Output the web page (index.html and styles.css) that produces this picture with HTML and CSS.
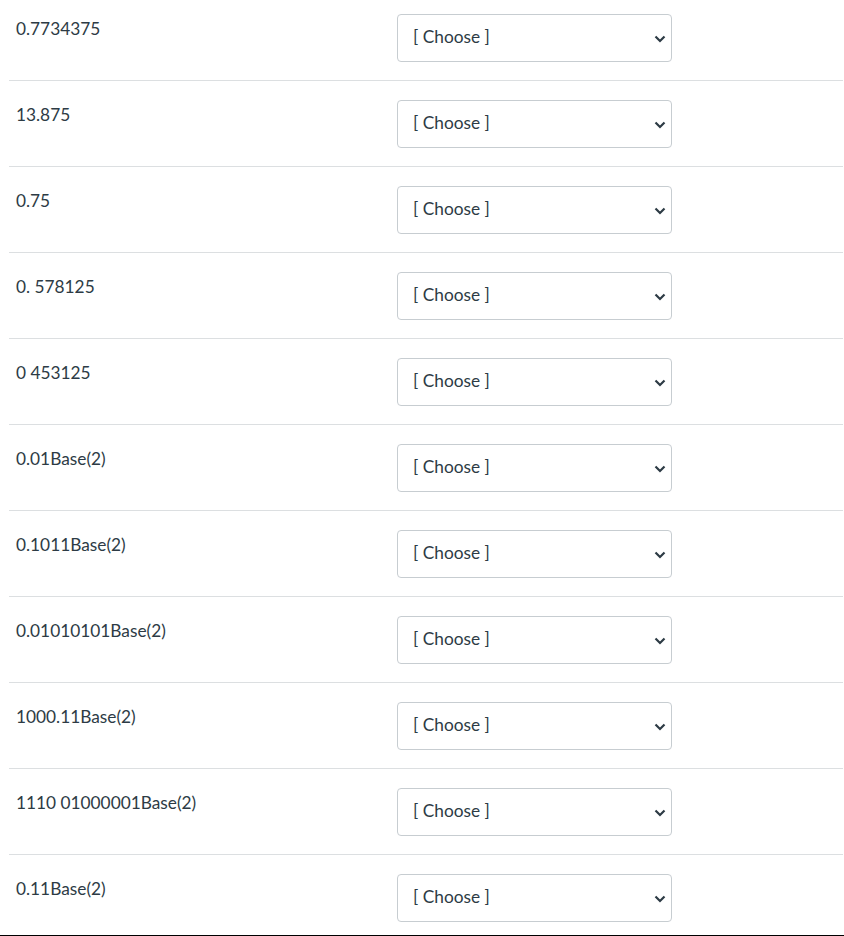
FILE: index.html
```html
<!DOCTYPE html>
<html lang="en">
<head>
  <meta charset="UTF-8">
  <title>Matching Question</title>
  <link rel="stylesheet" href="styles.css">
</head>
<body>
  <div class="page">
    <!-- answer rows -->
    <div class="match-list">
      <div class="match-row">
        <div class="match-label">0.7734375</div>
        <div class="select-wrap">
          <select class="match-select"><option>[ Choose ]</option></select>
          <svg class="chevron" width="12" height="8" viewBox="0 0 12 8"><path d="M1.5 1.5 L6 6 L10.5 1.5" fill="none" stroke="#2d3b45" stroke-width="2.2"/></svg>
        </div>
      </div>
      <div class="match-row">
        <div class="match-label">13.875</div>
        <div class="select-wrap">
          <select class="match-select"><option>[ Choose ]</option></select>
          <svg class="chevron" width="12" height="8" viewBox="0 0 12 8"><path d="M1.5 1.5 L6 6 L10.5 1.5" fill="none" stroke="#2d3b45" stroke-width="2.2"/></svg>
        </div>
      </div>
      <div class="match-row">
        <div class="match-label">0.75</div>
        <div class="select-wrap">
          <select class="match-select"><option>[ Choose ]</option></select>
          <svg class="chevron" width="12" height="8" viewBox="0 0 12 8"><path d="M1.5 1.5 L6 6 L10.5 1.5" fill="none" stroke="#2d3b45" stroke-width="2.2"/></svg>
        </div>
      </div>
      <div class="match-row">
        <div class="match-label">0. 578125</div>
        <div class="select-wrap">
          <select class="match-select"><option>[ Choose ]</option></select>
          <svg class="chevron" width="12" height="8" viewBox="0 0 12 8"><path d="M1.5 1.5 L6 6 L10.5 1.5" fill="none" stroke="#2d3b45" stroke-width="2.2"/></svg>
        </div>
      </div>
      <div class="match-row">
        <div class="match-label">0 453125</div>
        <div class="select-wrap">
          <select class="match-select"><option>[ Choose ]</option></select>
          <svg class="chevron" width="12" height="8" viewBox="0 0 12 8"><path d="M1.5 1.5 L6 6 L10.5 1.5" fill="none" stroke="#2d3b45" stroke-width="2.2"/></svg>
        </div>
      </div>
      <div class="match-row">
        <div class="match-label">0.01Base(2)</div>
        <div class="select-wrap">
          <select class="match-select"><option>[ Choose ]</option></select>
          <svg class="chevron" width="12" height="8" viewBox="0 0 12 8"><path d="M1.5 1.5 L6 6 L10.5 1.5" fill="none" stroke="#2d3b45" stroke-width="2.2"/></svg>
        </div>
      </div>
      <div class="match-row">
        <div class="match-label">0.1011Base(2)</div>
        <div class="select-wrap">
          <select class="match-select"><option>[ Choose ]</option></select>
          <svg class="chevron" width="12" height="8" viewBox="0 0 12 8"><path d="M1.5 1.5 L6 6 L10.5 1.5" fill="none" stroke="#2d3b45" stroke-width="2.2"/></svg>
        </div>
      </div>
      <div class="match-row">
        <div class="match-label">0.01010101Base(2)</div>
        <div class="select-wrap">
          <select class="match-select"><option>[ Choose ]</option></select>
          <svg class="chevron" width="12" height="8" viewBox="0 0 12 8"><path d="M1.5 1.5 L6 6 L10.5 1.5" fill="none" stroke="#2d3b45" stroke-width="2.2"/></svg>
        </div>
      </div>
      <div class="match-row">
        <div class="match-label">1000.11Base(2)</div>
        <div class="select-wrap">
          <select class="match-select"><option>[ Choose ]</option></select>
          <svg class="chevron" width="12" height="8" viewBox="0 0 12 8"><path d="M1.5 1.5 L6 6 L10.5 1.5" fill="none" stroke="#2d3b45" stroke-width="2.2"/></svg>
        </div>
      </div>
      <div class="match-row">
        <div class="match-label">1110 01000001Base(2)</div>
        <div class="select-wrap">
          <select class="match-select"><option>[ Choose ]</option></select>
          <svg class="chevron" width="12" height="8" viewBox="0 0 12 8"><path d="M1.5 1.5 L6 6 L10.5 1.5" fill="none" stroke="#2d3b45" stroke-width="2.2"/></svg>
        </div>
      </div>
      <div class="match-row">
        <div class="match-label">0.11Base(2)</div>
        <div class="select-wrap">
          <select class="match-select"><option>[ Choose ]</option></select>
          <svg class="chevron" width="12" height="8" viewBox="0 0 12 8"><path d="M1.5 1.5 L6 6 L10.5 1.5" fill="none" stroke="#2d3b45" stroke-width="2.2"/></svg>
        </div>
      </div>
    </div>
  </div>
</body>
</html>
```

FILE: styles.css
```css
/* page frame */
body {
  margin: 0;
  background-color: #fff;
  font-family: Lato, "Open Sans", Arial, sans-serif;
  color: #2d3b45;
}

.page {
  height: 936px;
  box-sizing: border-box;
  border-bottom: 1px solid #000;
  overflow: hidden;
}

/* rows */
.match-list {
  margin: -5px 1px 0 9px;
}

.match-row {
  display: flex;
  align-items: flex-start;
  height: 85px;
  border-bottom: 1px solid #dcdfe1;
}

.match-label {
  width: 381px;
  padding: 22px 0 0 7px;
  font-size: 17.3px;
  line-height: 24px;
}

/* select box */
.select-wrap {
  position: relative;
  margin-top: 19px;
}

.match-select {
  appearance: none;
  -webkit-appearance: none;
  width: 275px;
  height: 48px;
  padding: 0 30px 4px 15px;
  border: 1px solid #c7cdd1;
  border-radius: 4px;
  background-color: #fff;
  font-family: Lato, "Open Sans", Arial, sans-serif;
  font-size: 17.3px;
  color: #2d3b45;
}

.chevron {
  position: absolute;
  right: 6px;
  top: 21px;
  pointer-events: none;
}
```
